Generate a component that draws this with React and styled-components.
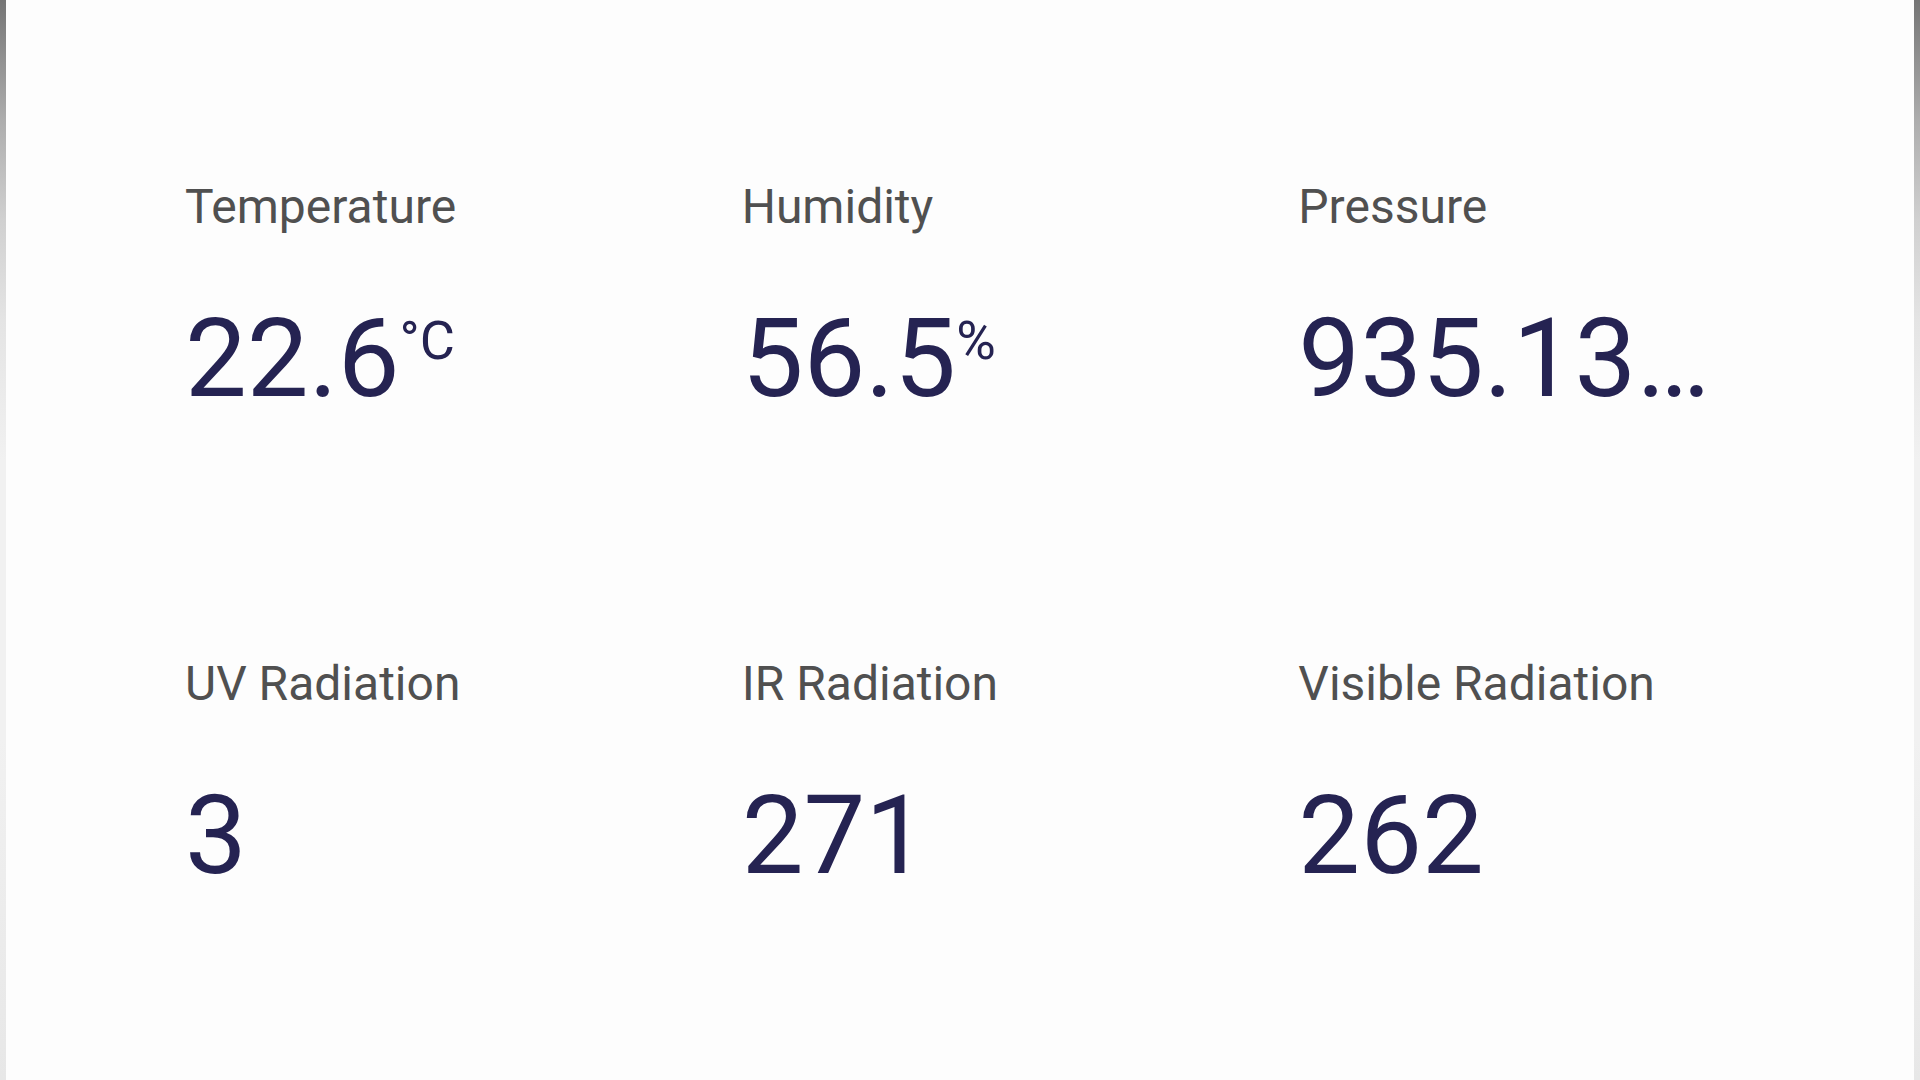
import React from "react";
import styled, { createGlobalStyle } from "styled-components";

const GlobalStyle = createGlobalStyle`
  * {
    box-sizing: border-box;
  }

  body {
    margin: 0;
    font-family: Roboto, sans-serif;
    background-color: #fdfdfd;
  }
`;

const Page = styled.div`
  min-height: 100vh;
  padding: 0 6px;
  background: linear-gradient(
    to bottom,
    #757575 0,
    #adadad 120px,
    #d0d0d0 220px,
    #e4e4e4 320px,
    #f1f1f1 460px,
    #f1f1f1 740px,
    #e7e7e7 100%
  );
`;

const Panel = styled.main`
  min-height: 100vh;
  padding: 177px 179px 0;
  background-color: #fdfdfd;
`;

const ReadingGrid = styled.dl`
  display: grid;
  grid-template-columns: repeat(3, minmax(0, 1fr));
  column-gap: 120px;
  row-gap: 230px;
  margin: 0;
`;

const Reading = styled.div`
  min-width: 0;
`;

const Label = styled.dt`
  color: #505050;
  font-size: 48px;
  line-height: 60px;
`;

const Value = styled.dd`
  display: flex;
  align-items: flex-start;
  margin: 57px 0 0;
  color: #252352;
`;

const Amount = styled.span`
  font-size: 110px;
  line-height: 130px;
  white-space: nowrap;
`;

const Unit = styled.span`
  font-size: 54px;
  line-height: 94px;
`;

const readings = [
  { label: "Temperature", value: "22.6", unit: "°C" },
  { label: "Humidity", value: "56.5", unit: "%" },
  { label: "Pressure", value: "935.13…" },
  { label: "UV Radiation", value: "3" },
  { label: "IR Radiation", value: "271" },
  { label: "Visible Radiation", value: "262" },
];

export default function App() {
  return (
    <Page>
      <GlobalStyle />
      <Panel>
        <ReadingGrid>
          {readings.map(({ label, value, unit }) => (
            <Reading key={label}>
              <Label>{label}</Label>
              <Value>
                <Amount>{value}</Amount>
                {unit && <Unit>{unit}</Unit>}
              </Value>
            </Reading>
          ))}
        </ReadingGrid>
      </Panel>
    </Page>
  );
}
